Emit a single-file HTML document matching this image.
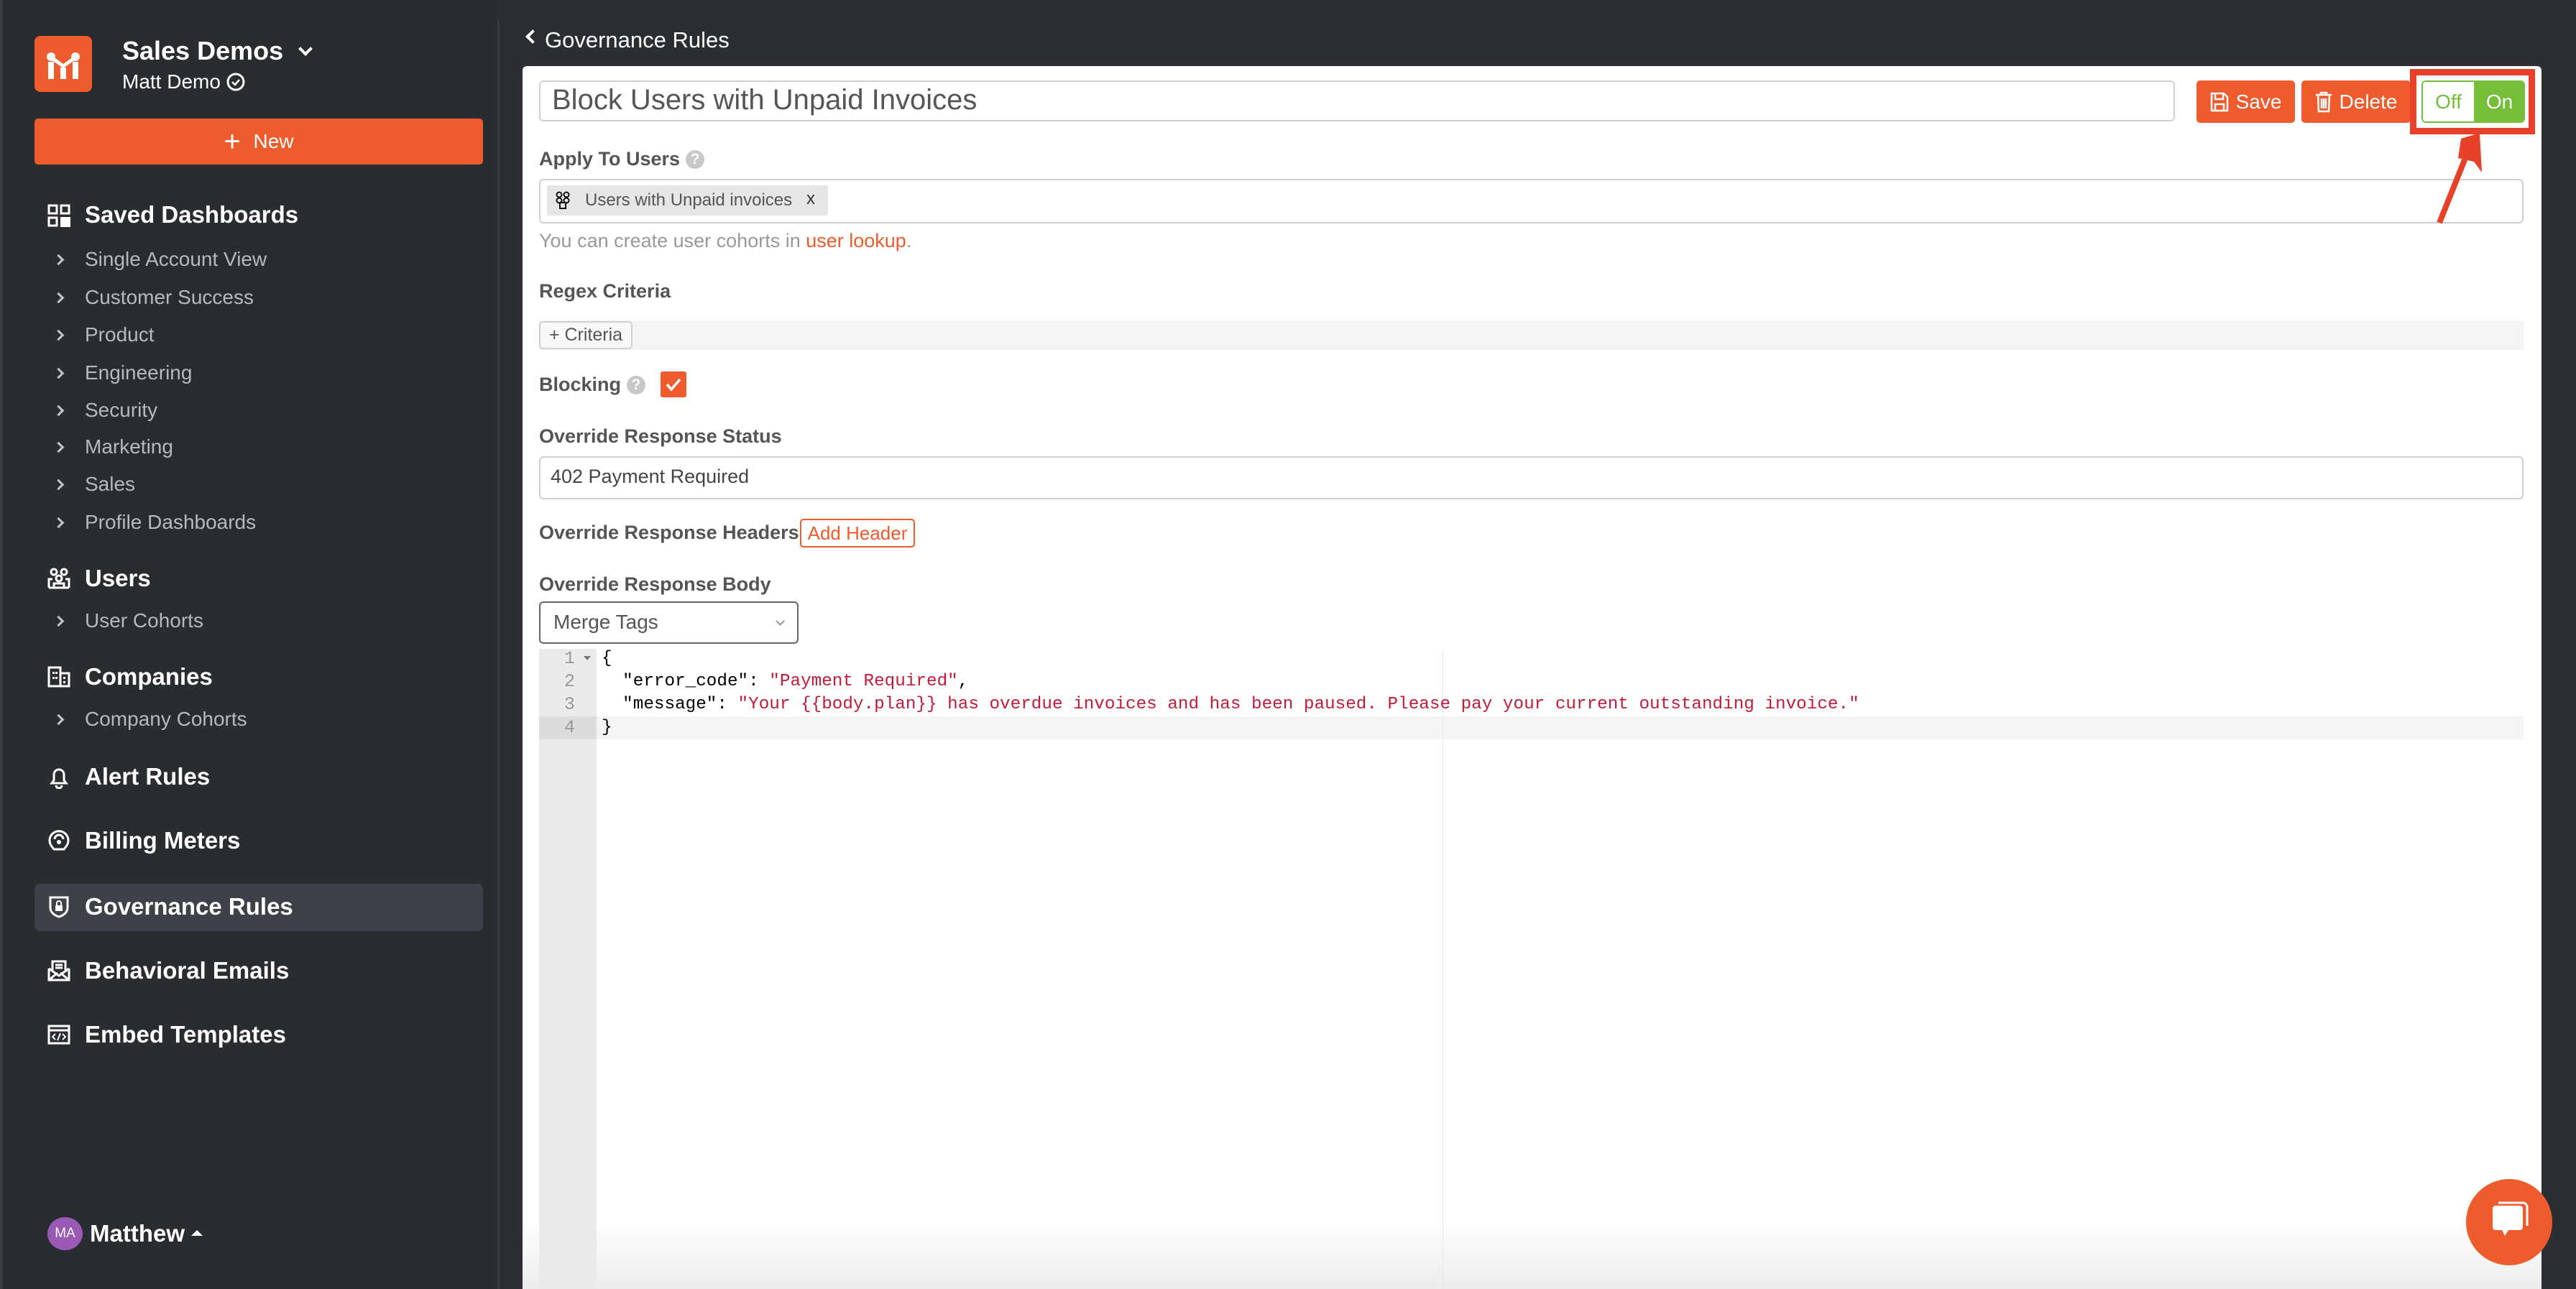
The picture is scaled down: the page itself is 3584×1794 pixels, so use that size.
<!DOCTYPE html>
<html><head><meta charset="utf-8"><style>
*{box-sizing:border-box;margin:0;padding:0}
body{width:3584px;height:1794px;background:#2b2f34;font-family:"Liberation Sans",sans-serif;position:relative;overflow:hidden}
.abs{position:absolute}
.side{left:0;top:0;width:692px;height:1794px;background:#292d32;border-left:4px solid #3a3e44}
.div{left:692px;top:28px;width:3px;height:1766px;background:#353a40}
.w{color:#fff;font-weight:bold;font-size:33px;white-space:nowrap}
.sub{color:#b7b9bc;font-size:28px;white-space:nowrap;left:118px}
.chev{left:76px;width:11px;height:11px;border-right:3px solid #c5c7ca;border-top:3px solid #c5c7ca;transform:rotate(45deg)}
.panel{left:727px;top:92px;width:2809px;height:1702px;background:#fff;border-radius:6px 6px 0 0}
.lbl{color:#555;font-weight:bold;font-size:27px;white-space:nowrap}
.inp{border:2px solid #ccd0d0;border-radius:6px;background:#fff}
.q{display:inline-block;width:26px;height:26px;border-radius:50%;background:#c8c8c8;color:#fff;font-size:21px;text-align:center;line-height:26px;vertical-align:2px;margin-left:8px}
.btn{background:#ee5b2c;border-radius:5px;color:#fff;font-size:28px;display:flex;align-items:center;justify-content:center;gap:10px}
.code{font-family:"Liberation Mono",monospace;font-size:24.3px;white-space:pre;left:837px}
.ln{font-family:"Liberation Mono",monospace;font-size:25px;color:#999;left:785px}
</style></head><body>
<div class="abs side"></div>
<div class="abs div"></div>
<div class="abs" style="left:48px;top:50px;width:80px;height:78px;background:#ee5b2c;border-radius:8px">
<svg width="80" height="78" viewBox="0 0 80 78"><g fill="#fff"><rect x="19" y="36" width="8" height="24"/><rect x="36" y="44" width="8" height="16"/><rect x="53" y="36" width="8" height="24"/></g><path d="M23 30 L40 42 L57 30" stroke="#fff" stroke-width="5" fill="none"/><circle cx="23" cy="29" r="6" fill="#fff"/><circle cx="57" cy="29" r="6" fill="#fff"/></svg></div>
<div class="abs w" style="left:170px;top:50px;font-size:36px">Sales Demos <span style="display:inline-block;width:14px;height:14px;border-right:4px solid #fff;border-bottom:4px solid #fff;transform:rotate(45deg);margin-left:14px;vertical-align:8px"></span></div>
<div class="abs" style="left:170px;top:98px;color:#fff;font-size:28px">Matt Demo <svg width="26" height="26" style="vertical-align:-4px"><circle cx="13" cy="13" r="11" fill="none" stroke="#fff" stroke-width="3"/><path d="M8 13l4 4 6-7" fill="none" stroke="#fff" stroke-width="2.5"/></svg></div>
<div class="abs btn" style="left:48px;top:165px;width:624px;height:64px;font-size:28px"><span style="font-size:40px;font-weight:300">+</span>&nbsp;New</div>
<svg class="abs" style="left:66px;top:284px" width="32" height="32"><g fill="none" stroke="#fff" stroke-width="3"><rect x="2" y="2" width="11" height="11"/><rect x="19" y="2" width="11" height="11"/><rect x="2" y="19" width="11" height="11"/></g><rect x="18" y="18" width="14" height="14" fill="#fff"/></svg>
<div class="abs w" style="left:118px;top:280px">Saved Dashboards</div>
<div class="abs chev" style="top:356px"></div><div class="abs sub" style="top:345px">Single Account View</div>
<div class="abs chev" style="top:409px"></div><div class="abs sub" style="top:398px">Customer Success</div>
<div class="abs chev" style="top:461px"></div><div class="abs sub" style="top:450px">Product</div>
<div class="abs chev" style="top:514px"></div><div class="abs sub" style="top:503px">Engineering</div>
<div class="abs chev" style="top:566px"></div><div class="abs sub" style="top:555px">Security</div>
<div class="abs chev" style="top:617px"></div><div class="abs sub" style="top:606px">Marketing</div>
<div class="abs chev" style="top:669px"></div><div class="abs sub" style="top:658px">Sales</div>
<div class="abs chev" style="top:722px"></div><div class="abs sub" style="top:711px">Profile Dashboards</div>
<svg class="abs" style="left:66px;top:790px" width="32" height="30"><g fill="none" stroke="#fff" stroke-width="3"><circle cx="9" cy="6" r="4"/><circle cx="23" cy="6" r="4"/><circle cx="16" cy="15" r="4"/><path d="M2 28V16h5M30 28V16h-5M9 28v-6h14v6M2 28h28"/></g></svg>
<div class="abs w" style="left:118px;top:786px">Users</div>
<div class="abs chev" style="top:859px"></div><div class="abs sub" style="top:848px">User Cohorts</div>
<svg class="abs" style="left:66px;top:927px" width="32" height="30"><g fill="none" stroke="#fff" stroke-width="3"><rect x="2" y="2" width="16" height="26"/><rect x="18" y="10" width="12" height="18"/></g><g fill="#fff"><rect x="7" y="8" width="3" height="3"/><rect x="11" y="8" width="3" height="3"/><rect x="7" y="15" width="3" height="3"/><rect x="11" y="15" width="3" height="3"/><rect x="22" y="15" width="3" height="3"/><rect x="22" y="21" width="3" height="3"/></g></svg>
<div class="abs w" style="left:118px;top:923px">Companies</div>
<div class="abs chev" style="top:996px"></div><div class="abs sub" style="top:985px">Company Cohorts</div>
<svg class="abs" style="left:68px;top:1066px" width="28" height="32"><path d="M4 24h20l-3-4V12a7 7 0 0 0-14 0v8z M10 27a4 4 0 0 0 8 0" fill="none" stroke="#fff" stroke-width="3"/></svg>
<div class="abs w" style="left:118px;top:1062px">Alert Rules</div>
<svg class="abs" style="left:66px;top:1154px" width="32" height="32"><g fill="none" stroke="#fff" stroke-width="3"><path d="M6 24a13 13 0 1 1 20 0l-3 4H9z"/><path d="M10 14a6 6 0 0 1 12 0"/></g><circle cx="16" cy="18" r="3" fill="#fff"/></svg>
<div class="abs w" style="left:118px;top:1151px">Billing Meters</div>
<div class="abs" style="left:48px;top:1230px;width:624px;height:66px;background:#3d4248;border-radius:8px"></div>
<svg class="abs" style="left:68px;top:1246px" width="28" height="32"><path d="M2 3h24v14c0 7-6 11-12 13C8 28 2 24 2 17z" fill="none" stroke="#fff" stroke-width="3"/><rect x="9" y="14" width="10" height="8" fill="#fff"/><path d="M11 14v-3a3 3 0 0 1 6 0v3" stroke="#fff" stroke-width="2" fill="none"/></svg>
<div class="abs w" style="left:118px;top:1243px">Governance Rules</div>
<svg class="abs" style="left:66px;top:1336px" width="32" height="30"><g fill="none" stroke="#fff" stroke-width="3"><path d="M2 12v16h28V12"/><path d="M2 28l12-10M30 28L18 18M2 12l14 10 14-10"/><path d="M7 14V2h18v12M11 7h10M11 11h10"/></g></svg>
<div class="abs w" style="left:118px;top:1332px">Behavioral Emails</div>
<svg class="abs" style="left:66px;top:1426px" width="32" height="28"><g fill="none" stroke="#fff" stroke-width="3"><rect x="2" y="2" width="28" height="24"/><path d="M2 8h28"/><path d="M11 13l-4 4 4 4M21 13l4 4-4 4M18 12l-4 10" stroke-width="2"/></g></svg>
<div class="abs w" style="left:118px;top:1421px">Embed Templates</div>
<div class="abs" style="left:66px;top:1694px;width:49px;height:46px;border-radius:50%;background:#9b59b6;color:#fff;font-size:19px;text-align:center;line-height:46px">MA</div>
<div class="abs w" style="left:125px;top:1698px;font-size:33px">Matthew <span style="display:inline-block;border-left:8px solid transparent;border-right:8px solid transparent;border-bottom:8px solid #fff;vertical-align:8px"></span></div>
<div class="abs" style="left:734px;top:44px;width:14px;height:14px;border-left:4px solid #fff;border-bottom:4px solid #fff;transform:rotate(45deg)"></div>
<div class="abs" style="left:758px;top:38px;color:#fff;font-size:31px">Governance Rules</div>
<div class="abs panel"></div>
<div class="abs" style="left:727px;top:1700px;width:2809px;height:94px;background:linear-gradient(#fff0,#ececec)"></div>
<div class="abs inp" style="left:750px;top:112px;width:2276px;height:57px"></div>
<div class="abs" style="left:768px;top:117px;font-size:40px;color:#555;white-space:nowrap">Block Users with Unpaid Invoices</div>
<div class="abs btn" style="left:3056px;top:112px;width:137px;height:59px"><svg width="26" height="28" viewBox="0 0 26 28"><path d="M2 2h17l5 5v19H2z M7 2v8h11V2 M7 26v-9h12v9" fill="none" stroke="#fff" stroke-width="2.5"/></svg>Save</div>
<div class="abs btn" style="left:3202px;top:112px;width:152px;height:59px"><svg width="24" height="30" viewBox="0 0 24 30"><path d="M1 5h22M8 5V2h8v3M4 5l1 23h14l1-23M9 10v14M12 10v14M15 10v14" fill="none" stroke="#fff" stroke-width="2.5"/></svg>Delete</div>
<div class="abs" style="left:3353px;top:96px;width:174px;height:91px;border:9px solid #e8412a"></div>
<div class="abs" style="left:3369px;top:112px;width:144px;height:59px;border:2px solid #76bd3a;border-radius:6px;overflow:hidden;font-size:28px">
<div class="abs" style="left:0;top:0;width:71px;height:55px;background:#fff;color:#76bd3a;text-align:center;line-height:55px">Off</div>
<div class="abs" style="left:71px;top:0;width:71px;height:55px;background:#76bd3a;color:#fff;text-align:center;line-height:55px">On</div></div>
<div class="abs lbl" style="left:750px;top:206px">Apply To Users<span class="q">?</span></div>
<div class="abs inp" style="left:750px;top:249px;width:2761px;height:62px"></div>
<div class="abs" style="left:761px;top:258px;width:391px;height:42px;background:#e6e6e6;border-radius:3px"></div>
<svg class="abs" style="left:771px;top:266px" width="24" height="26"><g fill="none" stroke="#111" stroke-width="2"><circle cx="7" cy="5" r="3.5"/><circle cx="17" cy="5" r="3.5"/><circle cx="7" cy="13" r="3.5"/><circle cx="17" cy="13" r="3.5"/><rect x="8" y="16" width="8" height="8"/></g></svg>
<div class="abs" style="left:814px;top:265px;font-size:24px;color:#555;white-space:nowrap">Users with Unpaid invoices</div>
<div class="abs" style="left:1122px;top:263px;font-size:24px;color:#333">x</div>
<div class="abs" style="left:750px;top:320px;font-size:27px;color:#999;white-space:nowrap">You can create user cohorts in <span style="color:#ee5b2c">user lookup</span>.</div>
<div class="abs lbl" style="left:750px;top:390px">Regex Criteria</div>
<div class="abs" style="left:750px;top:446px;width:2761px;height:41px;background:#f4f4f4"></div>
<div class="abs" style="left:750px;top:447px;width:130px;height:39px;border:2px solid #d0d0d0;border-radius:5px;background:#f8f8f8;color:#555;font-size:25px;line-height:35px;text-align:center">+ Criteria</div>
<div class="abs lbl" style="left:750px;top:520px">Blocking<span class="q">?</span></div>
<div class="abs" style="left:919px;top:517px;width:36px;height:36px;background:#ee5b2c;border-radius:3px"><svg width="36" height="36"><path d="M9 18l6 7 12-14" fill="none" stroke="#fff" stroke-width="3.5"/></svg></div>
<div class="abs lbl" style="left:750px;top:592px">Override Response Status</div>
<div class="abs inp" style="left:750px;top:635px;width:2761px;height:60px"></div>
<div class="abs" style="left:766px;top:648px;font-size:27px;color:#444">402 Payment Required</div>
<div class="abs lbl" style="left:750px;top:726px">Override Response Headers</div>
<div class="abs" style="left:1113px;top:722px;width:160px;height:40px;border:2px solid #ee5b2c;border-radius:5px;color:#ee5b2c;font-size:26px;text-align:center;line-height:36px;background:#fff">Add Header</div>
<div class="abs lbl" style="left:750px;top:798px">Override Response Body</div>
<div class="abs" style="left:750px;top:837px;width:361px;height:59px;border:2px solid #666;border-radius:6px"></div>
<div class="abs" style="left:770px;top:850px;font-size:28px;color:#555">Merge Tags</div>
<div class="abs" style="left:1081px;top:860px;width:9px;height:9px;border-right:2px solid #999;border-bottom:2px solid #999;transform:rotate(45deg)"></div>
<div class="abs" style="left:750px;top:903px;width:80px;height:891px;background:#ebebeb"></div>
<div class="abs" style="left:750px;top:997px;width:80px;height:32px;background:#dcdcdc"></div>
<div class="abs" style="left:830px;top:997px;width:2681px;height:32px;background:#f4f4f4"></div>
<div class="abs" style="left:2007px;top:903px;width:1px;height:891px;background:#e8e8e8"></div>
<div class="abs ln" style="top:902px">1</div><div class="abs" style="left:812px;top:913px;border-left:5px solid transparent;border-right:5px solid transparent;border-top:6px solid #777"></div>
<div class="abs ln" style="top:934px">2</div>
<div class="abs ln" style="top:966px">3</div>
<div class="abs ln" style="top:998px">4</div>
<div class="abs code" style="top:903px;color:#000">{</div>
<div class="abs code" style="top:935px;color:#000">  "error_code": <span style="color:#c41a3a">"Payment Required"</span>,</div>
<div class="abs code" style="top:967px;color:#000">  "message": <span style="color:#c41a3a">"Your {{body.plan}} has overdue invoices and has been paused. Please pay your current outstanding invoice."</span></div>
<div class="abs code" style="top:999px;color:#000">}</div>
<div class="abs" style="left:3431px;top:1641px;width:120px;height:120px;border-radius:50%;background:#ee5b2c"></div>
<svg class="abs" style="left:3460px;top:1670px" width="62" height="62"><path d="M12 8h34a4 4 0 0 1 4 4v26a4 4 0 0 1-4 4H30l-5 8-4-8h-9a4 4 0 0 1-4-4V12a4 4 0 0 1 4-4z" fill="#fff"/><path d="M16 4h34a6 6 0 0 1 6 6v26" fill="none" stroke="#fff" stroke-width="3"/></svg>
<svg class="abs" style="left:3380px;top:185px;z-index:5" width="90" height="135"><path d="M14 125 L56 20" stroke="#e8412a" stroke-width="8"/><path d="M44 8 L70 0 L73 55 L62 40 L40 35 Z" fill="#e8412a"/></svg>
</body></html>
